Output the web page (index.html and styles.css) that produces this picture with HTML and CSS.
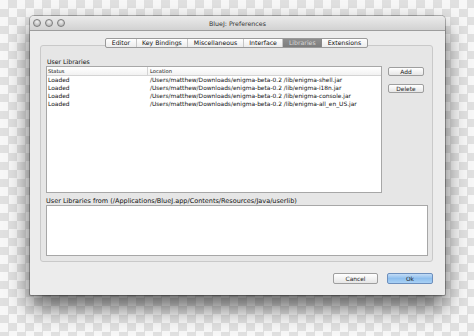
FILE: index.html
```html
<!DOCTYPE html>
<html>
<head>
<meta charset="utf-8">
<link rel="stylesheet" href="styles.css">
</head>
<body>
<div class="window">
  <div class="titlebar">
    <div class="lights"><span class="light"></span><span class="light"></span><span class="light"></span></div>
    <div class="title">BlueJ: Preferences</div>
  </div>
  <div class="body">
    <div class="tabs">
      <span class="tab">Editor</span>
      <span class="tab">Key Bindings</span>
      <span class="tab">Miscellaneous</span>
      <span class="tab">Interface</span>
      <span class="tab sel">Libraries</span>
      <span class="tab last">Extensions</span>
    </div>
    <div class="pane">
      <div class="label">User Libraries</div>
      <div class="upper">
        <div class="table">
          <div class="row head"><span class="c1">Status</span><span class="c2">Location</span></div>
          <div class="row"><span class="c1">Loaded</span><span class="c2">/Users/matthew/Downloads/enigma-beta-0.2 /lib/enigma-shell.jar</span></div>
          <div class="row"><span class="c1">Loaded</span><span class="c2">/Users/matthew/Downloads/enigma-beta-0.2 /lib/enigma-i18n.jar</span></div>
          <div class="row"><span class="c1">Loaded</span><span class="c2">/Users/matthew/Downloads/enigma-beta-0.2 /lib/enigma-console.jar</span></div>
          <div class="row"><span class="c1">Loaded</span><span class="c2">/Users/matthew/Downloads/enigma-beta-0.2 /lib/enigma-all_en_US.jar</span></div>
        </div>
        <div class="sidebtns">
          <div class="btn">Add</div>
          <div class="btn">Delete</div>
        </div>
      </div>
      <div class="label2">User Libraries from (/Applications/BlueJ.app/Contents/Resources/Java/userlib)</div>
      <div class="box"></div>
    </div>
    <div class="footer">
      <div class="btn wide">Cancel</div>
      <div class="btn wide ok">Ok</div>
    </div>
  </div>
</div>
</body>
</html>
```
FILE: styles.css
```css
html, body {
  margin: 0;
  padding: 0;
}
body {
  width: 474px;
  height: 336px;
  overflow: hidden;
  background-color: #f7f7f7;
  background-image: conic-gradient(#e0e0e0 25%, transparent 0 50%, #e0e0e0 0 75%, transparent 0);
  background-size: 17px 17px;
  font-family: "DejaVu Sans", sans-serif;
  color: #111;
}
.window {
  margin: 16px 0 0 30px;
  width: 415px;
  height: 279px;
  background: #ececec;
  border-radius: 4px 4px 1px 1px;
  box-shadow: 0 0 0 1px rgba(0,0,0,0.28), 0 12px 22px rgba(0,0,0,0.6);
  display: flex;
  flex-direction: column;
}
.titlebar {
  height: 14px;
  border-bottom: 1px solid #9d9d9d;
  background: linear-gradient(#ebebeb, #d2d2d2);
  border-radius: 4px 4px 0 0;
  display: flex;
  align-items: center;
  position: relative;
}
.lights {
  display: flex;
  gap: 4px;
  margin-left: 3px;
}
.light {
  width: 6px;
  height: 6px;
  border-radius: 50%;
  border: 0.8px solid #7c7c7c;
  background: radial-gradient(circle at 50% 30%, #f0f0f0, #a9a9a9);
}
.title {
  position: absolute;
  left: 0;
  right: 0;
  text-align: center;
  font-size: 6.3px;
  color: #333;
}
.body {
  flex: 1;
  display: flex;
  flex-direction: column;
  padding-top: 7px;
}
.tabs {
  align-self: center;
  display: flex;
  height: 10px;
  box-sizing: border-box;
  border: 1px solid #9a9a9a;
  border-radius: 2px;
  background: linear-gradient(#ffffff, #ececec);
  position: relative;
  z-index: 1;
  font-size: 6.2px;
  margin-left: -2px;
}
.tab {
  display: flex;
  align-items: center;
  padding: 0 5.5px;
  border-right: 1px solid #c6c6c6;
  line-height: 8px;
}
.tab.last { border-right: none; }
.tab.sel {
  background: linear-gradient(#8e8e8e, #7d7d7d);
  color: #d8d8d8;
  border-right-color: #888;
}
.pane {
  margin: -3px 12px 0 10px;
  height: 217px;
  box-sizing: border-box;
  border: 1px solid #c9c9c9;
  border-radius: 3px;
  background: #e6e6e6;
  padding: 12px 4px 5px 5px;
  display: flex;
  flex-direction: column;
}
.label {
  font-size: 6.2px;
  line-height: 8px;
  height: 8px;
  padding-left: 1px;
}
.upper {
  display: flex;
  height: 127px;
}
.table {
  flex: 1;
  box-sizing: border-box;
  border: 1px solid #a7a7a7;
  background: #fff;
  font-size: 5.9px;
}
.row {
  display: flex;
  height: 8px;
  line-height: 8px;
  white-space: nowrap;
}
.row.head {
  height: 8px;
  border-bottom: 1px solid #d4d4d4;
  font-size: 5.2px;
  background: linear-gradient(#ffffff, #f2f2f2);
}
.c1 {
  width: 101px;
  padding-left: 1px;
  box-sizing: border-box;
}
.row.head .c1 {
  border-right: 1px solid #d4d4d4;
}
.c2 {
  padding-left: 2px;
}
.sidebtns {
  width: 36px;
  margin: 1px 4px 0 6px;
  display: flex;
  flex-direction: column;
  gap: 8px;
}
.btn {
  height: 9px;
  box-sizing: border-box;
  border: 1px solid #9e9e9e;
  border-radius: 2px;
  background: linear-gradient(#ffffff, #e6e6e6);
  font-size: 5.9px;
  display: flex;
  align-items: center;
  justify-content: center;
  color: #222;
}
.label2 {
  font-size: 6.5px;
  line-height: 7px;
  height: 7px;
  margin-top: 5px;
  white-space: nowrap;
}
.box {
  height: 51px;
  box-sizing: border-box;
  border: 1px solid #a7a7a7;
  background: #fff;
}
.footer {
  display: flex;
  justify-content: flex-end;
  gap: 9px;
  padding-right: 12px;
  margin-top: 11px;
}
.btn.wide {
  height: 11px;
  width: 45px;
}
.btn.ok {
  width: 46px;
  border-color: #6d8fbd;
  background: linear-gradient(#c3dcf5, #8ebfee 50%, #a9d1f5);
}
```
